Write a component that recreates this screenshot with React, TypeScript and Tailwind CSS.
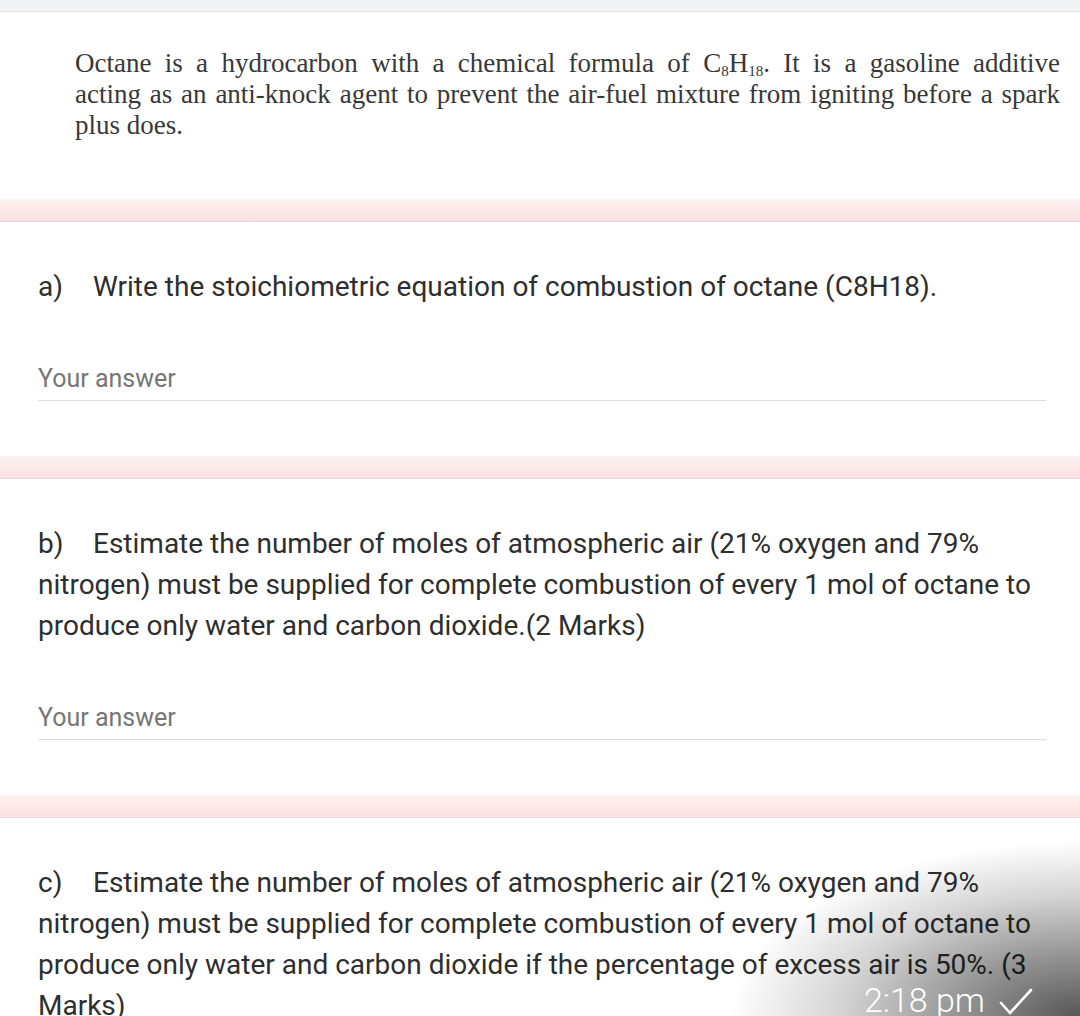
import React from 'react';

const Divider = () => (
  <div className="h-[23px] border-b border-[#e3dcdc] bg-gradient-to-b from-[#fdf1f1] to-[#fbe1e1]" />
);

const Label = ({ children }: { children: React.ReactNode }) => (
  <span className="inline-block w-[55px]">{children}</span>
);

const AnswerField = () => (
  <div className="mt-[58px] pb-[7px] border-b border-[#dadce0] text-[25px] leading-[28px] text-[#767676]">
    Your answer
  </div>
);

const App = () => {
  return (
    <div className="relative w-[1080px] h-[1016px] overflow-hidden bg-white font-[Roboto,sans-serif]">
      {/* top strip */}
      <div className="h-[12px] bg-[#f2f3f5] border-b border-[#e2e3e5]" />

      {/* intro card: pasted text image, justified lines */}
      <section className="h-[187px] bg-white pl-[75px] pr-[20px] pt-[36px]">
        <p className="font-['Liberation_Serif',serif] text-[27px] leading-[31px] text-[#383838] text-justify">
          <span className="block [text-align-last:justify]">
            Octane is a hydrocarbon with a chemical formula of C<sub className="text-[15px]">8</sub>H<sub className="text-[15px]">18</sub>. It is a gasoline additive
          </span>
          <span className="block [text-align-last:justify]">
            acting as an anti-knock agent to prevent the air-fuel mixture from igniting before a spark
          </span>
          <span className="block">plus does.</span>
        </p>
      </section>

      <Divider />

      {/* question a */}
      <section className="bg-white pl-[38px] pr-[34px] pt-[44px] pb-[55px]">
        <p className="text-[28px] leading-[41px] text-[#2e2e2e]">
          <Label>a)</Label>Write the stoichiometric equation of combustion of octane (C8H18).
        </p>
        <AnswerField />
      </section>

      <Divider />

      {/* question b */}
      <section className="bg-white pl-[38px] pr-[34px] pt-[44px] pb-[55px]">
        <p className="text-[28px] leading-[41px] text-[#2e2e2e]">
          <Label>b)</Label>Estimate the number of moles of atmospheric air (21% oxygen and 79% nitrogen) must be supplied for complete combustion of every 1 mol of octane to produce only water and carbon dioxide.(2 Marks)
        </p>
        <AnswerField />
      </section>

      <Divider />

      {/* question c */}
      <section className="bg-white pl-[38px] pr-[34px] pt-[44px]">
        <p className="text-[28px] leading-[41px] text-[#2e2e2e]">
          <Label>c)</Label>Estimate the number of moles of atmospheric air (21% oxygen and 79% nitrogen) must be supplied for complete combustion of every 1 mol of octane to produce only water and carbon dioxide if the percentage of excess air is 50%. (3 Marks)
        </p>
      </section>

      {/* timestamp overlay */}
      <div className="absolute right-0 bottom-0 w-[360px] h-[180px] bg-[radial-gradient(ellipse_350px_175px_at_100%_100%,rgba(0,0,0,0.66)_0%,rgba(0,0,0,0.42)_35%,rgba(0,0,0,0.16)_70%,rgba(0,0,0,0)_100%)]" />
      <div className="absolute left-[864px] top-[980px] flex items-start gap-[14px] text-white">
        <span className="text-[34px] leading-[40px] font-light">2:18 pm</span>
        <svg width="34" height="28" viewBox="0 0 34 28" className="mt-[8px]" fill="none">
          <path d="M2 15 L11 25 L32 2" stroke="white" strokeWidth="2.6" strokeLinecap="round" strokeLinejoin="round" />
        </svg>
      </div>
    </div>
  );
};

export default App;
